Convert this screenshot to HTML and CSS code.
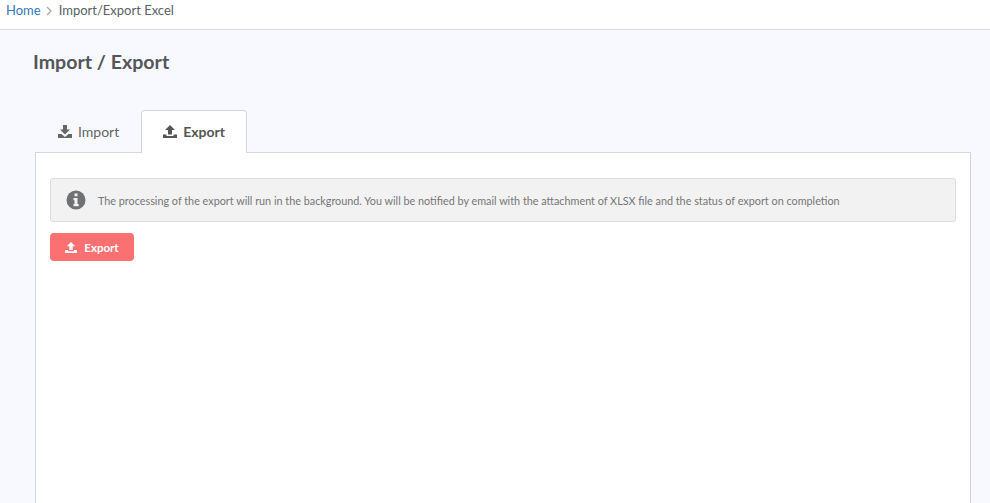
FILE: index.html
```html
<!DOCTYPE html>
<html lang="en">
<head>
  <meta charset="UTF-8" />
  <title>Import/Export Excel</title>
  <link rel="stylesheet" href="styles.css">
</head>
<body>
  <div class="breadcrumb">
    <a href="#">Home</a>
    <svg class="crumb-sep" viewBox="0 0 8 10"><path d="M2 1l4 4-4 4" fill="none" stroke="#a9a9a9" stroke-width="1.3"/></svg>
    <span>Import/Export Excel</span>
  </div>
  <div class="page">
    <h2>Import / Export</h2>
    <div class="tabs">
      <div class="tab">
        <svg class="icon" viewBox="0 0 14 13"><path d="M5 0h4v4.500h3L7 9.500 2 4.500h3zM0 9h3.500L7 12l3.500-3H14v4H0z" fill="currentColor"/></svg>
        Import
      </div>
      <div class="tab active">
        <svg class="icon" viewBox="0 0 14 13"><path d="M7 0l5 5H9v4.500H5V5H2zM0 9.500h3.500v1.500h7V9.500H14V13H0z" fill="currentColor"/></svg>
        Export
      </div>
    </div>
    <div class="panel">
      <div class="notice">
        <svg class="info" viewBox="0 0 20 20"><circle cx="10" cy="10" r="9.500" fill="#6f7173"/><path d="M8.500 3.500h3v2.800h-3zM7.500 8h4v6h1.200v2.300H7.500V14h1v-3.700h-1z" fill="#f2f2f2"/></svg>
        <span>The processing of the export will run in the background. You will be notified by email with the attachment of XLSX file and the status of export on completion</span>
      </div>
      <button class="btn">
        <svg class="icon-sm" viewBox="0 0 14 13"><path d="M7 0l5 5H9v4.500H5V5H2zM0 9.500h3.500v1.500h7V9.500H14V13H0z" fill="currentColor"/></svg>
        Export
      </button>
    </div>
  </div>
</body>
</html>
```

FILE: styles.css
```css
html, body {
  height: 100%;
}
body {
  margin: 0;
  font-family: Lato, sans-serif;
  color: #555;
  background: #f8f9fe;
  overflow: hidden;
  display: flex;
  flex-direction: column;
}
.breadcrumb {
  height: 29px;
  background: #fff;
  border-bottom: 1px solid #d9d9de;
  padding-left: 6px;
  display: flex;
  align-items: flex-start;
  font-size: 13px;
  line-height: 20px;
  color: #5a5f66;
}
.breadcrumb a {
  color: #337ab7;
  text-decoration: none;
}
.crumb-sep {
  width: 8px;
  height: 10px;
  margin: 6px 6px 0 4px;
}
.page {
  flex: 1;
  min-height: 0;
  padding: 0 19px 0 35px;
  display: flex;
  flex-direction: column;
}
h2 {
  margin: 19px 0 0 -2px;
  font-size: 19.6px;
  line-height: 25px;
  font-weight: 700;
  color: #54565a;
}
.tabs {
  display: flex;
  margin-top: 36px;
  margin-bottom: -1px;
  position: relative;
}
.tab {
  height: 43px;
  box-sizing: border-box;
  padding: 0 21px 2px 22px;
  display: flex;
  align-items: center;
  gap: 6px;
  font-size: 14px;
  color: #666;
  border: 1px solid transparent;
  border-bottom: 0;
}
.tab.active {
  padding-left: 21px;
  background: #fff;
  border-color: #d5d5de;
  border-radius: 4px 4px 0 0;
  font-weight: 700;
  color: #555;
}
.icon {
  width: 14px;
  height: 13px;
}
.panel {
  flex: 1;
  background: #fff;
  border: 1px solid #d5d5de;
  border-bottom: 0;
  padding: 25px 14px 0;
}
.notice {
  height: 44px;
  box-sizing: border-box;
  background: #f2f2f2;
  border: 1px solid #dedede;
  border-radius: 3px;
  display: flex;
  align-items: center;
  padding-left: 15px;
  gap: 12px;
  font-size: 10.82px;
  color: #767676;
}
.info {
  width: 20px;
  height: 20px;
}
.btn {
  margin-top: 11px;
  width: 84px;
  height: 28px;
  background: #fb7070;
  color: #fff;
  border: 0;
  border-radius: 4px;
  font-family: Lato, sans-serif;
  font-size: 11.5px;
  font-weight: 700;
  display: flex;
  align-items: center;
  justify-content: center;
  gap: 7px;
  padding: 0;
}
.icon-sm {
  width: 12px;
  height: 11px;
}
```
